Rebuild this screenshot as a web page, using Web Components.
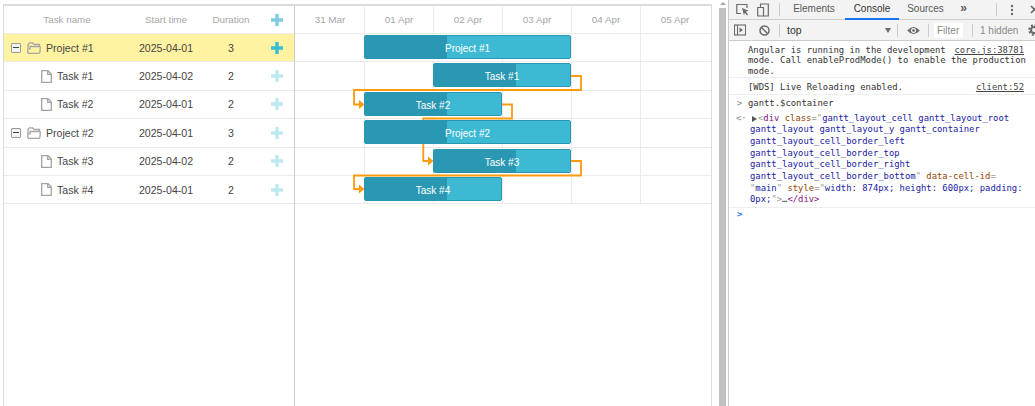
<!DOCTYPE html>
<html>
<head>
<meta charset="utf-8">
<style>
    html, body { margin: 0; height: 100%; overflow: hidden; background: #fff; }
    body { font-family: "Liberation Sans", Arial, sans-serif; }
</style>
</head>
<body>
<app-shell>
    <gantt-chart></gantt-chart>
    <page-scroll></page-scroll>
    <dev-tools></dev-tools>
</app-shell>

<script>
const ROW_H = 28.4;
const COLS = '126px 72px 58px 34px';
const tasks = [
    { name: 'Project #1', start: '2025-04-01', dur: 3, project: true, active: true },
    { name: 'Task #1', start: '2025-04-02', dur: 2 },
    { name: 'Task #2', start: '2025-04-01', dur: 2 },
    { name: 'Project #2', start: '2025-04-01', dur: 3, project: true },
    { name: 'Task #3', start: '2025-04-02', dur: 2 },
    { name: 'Task #4', start: '2025-04-01', dur: 2 },
];
const days = ['31 Mar', '01 Apr', '02 Apr', '03 Apr', '04 Apr', '05 Apr'];

const folderIcon = `<svg width="14" height="12" viewBox="0 0 14 12" fill="none" stroke="#a6a6a6" stroke-width="1.3">
    <path d="M1 7V2.5L2.5 .8H5.5L7 2.500H12.500V4.500"/>
    <path d="M3 4.500H12.500Q13.400 4.500 13.300 5.500L13 9.800Q12.800 11.300 11.500 11.300H2.500Q.7 11.300 .7 9.800V8Q.7 6.800 2 6.800H3Z"/>
</svg>`;
const fileIcon = `<svg width="11" height="13" viewBox="0 0 11 13" fill="#fff" stroke="#a3a3a3" stroke-width="1.3">
    <path d="M.7 .7H7L10.300 4V12.300H.7Z"/>
    <path d="M6.700 .7V4.300H10.300" fill="none"/>
</svg>`;
const plusIcon = (color) => `<svg width="12" height="12" viewBox="0 0 12 12" fill="${color}">
    <path d="M4.300 0H7.700V4.300H12V7.700H7.700V12H4.300V7.700H0V4.300H4.300Z"/>
</svg>`;

class GridRow extends HTMLElement {
    constructor() {
        super();
        this.attachShadow({ mode: 'open' });
    }
    connectedCallback() {
        const project = this.hasAttribute('project');
        const active = this.hasAttribute('active');
        const plus = active ? '#3db9d3' : '#bfe9f1';
        this.shadowRoot.innerHTML = `
            <style>
                :host {
                    display: grid;
                    grid-template-columns: ${COLS};
                    height: ${ROW_H}px;
                    box-sizing: border-box;
                    align-items: center;
                    border-bottom: 1px solid #ebebeb;
                    font-size: 10.6px;
                    color: #454545;
                    background: ${active ? '#fff3a1' : '#fff'};
                }
                .tree {
                    display: flex;
                    align-items: center;
                    padding-left: ${project ? 7 : 37}px;
                    gap: 5px;
                    white-space: nowrap;
                }
                .toggle {
                    width: 8px;
                    height: 8px;
                    border: 1px solid #9a9a9a;
                    background: #f4f4f4;
                    border-radius: 1px;
                    margin-right: 1px;
                    display: flex;
                    align-items: center;
                    justify-content: center;
                }
                .toggle i {
                    width: 6px;
                    height: 1px;
                    background: #444;
                }
                svg { display: block; flex: none; }
                .num { text-align: center; }
                .add { display: flex; justify-content: center; }
            </style>
            <div class="tree">
                ${project ? '<span class="toggle"><i></i></span>' + folderIcon : fileIcon}
                <span><slot></slot></span>
            </div>
            <div class="num">${this.getAttribute('start')}</div>
            <div class="num">${this.getAttribute('dur')}</div>
            <div class="add">${plusIcon(plus)}</div>
        `;
    }
}
customElements.define('grid-row', GridRow);

class GanttBar extends HTMLElement {
    constructor() {
        super();
        this.attachShadow({ mode: 'open' });
    }
    connectedCallback() {
        this.shadowRoot.innerHTML = `
            <style>
                :host {
                    position: absolute;
                    left: ${this.getAttribute('x')}px;
                    top: ${this.getAttribute('y')}px;
                    width: ${this.getAttribute('w')}px;
                    height: 24px;
                    box-sizing: border-box;
                    background: #3db9d3;
                    border: 1px solid #2898b0;
                    border-radius: 2px;
                    overflow: hidden;
                    color: #fff;
                    font-size: 10px;
                }
                .progress {
                    position: absolute;
                    left: 0;
                    top: 0;
                    bottom: 0;
                    width: ${this.getAttribute('p')}px;
                    background: #2a98b2;
                }
                .label {
                    position: relative;
                    text-align: center;
                    line-height: 25px;
                }
            </style>
            <div class="progress"></div>
            <div class="label"><slot></slot></div>
        `;
    }
}
customElements.define('gantt-bar', GanttBar);

class GanttChart extends HTMLElement {
    constructor() {
        super();
        this.attachShadow({ mode: 'open' });
        const rows = tasks.map(t => `<grid-row start="${t.start}" dur="${t.dur}" ${t.project ? 'project' : ''} ${t.active ? 'active' : ''}>${t.name}</grid-row>`).join('');
        const timeRows = tasks.map(() => `<div class="trow">${days.map(() => '<span></span>').join('')}</div>`).join('');
        this.shadowRoot.innerHTML = `
            <style>
                :host {
                    display: flex;
                    flex: none;
                    width: 709px;
                    height: 402px;
                    margin: 4px 0 0 3px;
                    box-sizing: border-box;
                    border: solid #dcdcdc;
                    border-width: 2px 1px 0 1px;
                }
                .grid {
                    width: 290px;
                    flex: none;
                    border-right: 1px solid #cecece;
                }
                .ghead {
                    display: grid;
                    grid-template-columns: ${COLS};
                    height: 27px;
                    align-items: center;
                    font-size: 9.8px;
                    color: #a6a6a6;
                    border-bottom: 1px solid #ebebeb;
                    text-align: center;
                }
                .ghead .add { display: flex; justify-content: center; }
                .ghead svg { display: block; }
                .timeline { flex: 1; position: relative; overflow: hidden; }
                .scale {
                    display: grid;
                    grid-template-columns: repeat(6, 69px);
                    height: 27px;
                    font-size: 9.8px;
                    color: #a6a6a6;
                    border-bottom: 1px solid #ebebeb;
                }
                .scale span {
                    display: flex;
                    align-items: center;
                    justify-content: center;
                    border-left: 1px solid #ebebeb;
                }
                .scale span:first-child, .trow span:first-child { border-left-color: transparent; }
                .trow {
                    display: grid;
                    grid-template-columns: repeat(6, 69px);
                    height: ${ROW_H}px;
                    box-sizing: border-box;
                    border-bottom: 1px solid #ebebeb;
                }
                .trow span { border-left: 1px solid #ebebeb; }
                .links { position: absolute; left: 0; top: 0; }
            </style>
            <div class="grid">
                <div class="ghead">
                    <div>Task name</div>
                    <div>Start time</div>
                    <div>Duration</div>
                    <div class="add">${plusIcon('#7fcbe0')}</div>
                </div>
                ${rows}
            </div>
            <div class="timeline">
                <div class="scale">${days.map(d => `<span>${d}</span>`).join('')}</div>
                ${timeRows}
                <svg class="links" width="420" height="220" fill="none" stroke="#ff9a0d" stroke-width="1.8">
                    <path d="M275 70H286V84H59V98.500H65"/>
                    <path d="M206 98.500H217V112.500H128.300V155H134"/>
                    <path d="M275 155H286V169.500H59V183H65"/>
                    <g fill="#ff9a0d" stroke="none">
                        <path d="M64 94L69.500 98.500L64 103Z"/>
                        <path d="M133 150.500L138.500 155L133 159.500Z"/>
                        <path d="M64 178.500L69.500 183L64 187.500Z"/>
                    </g>
                </svg>
                <gantt-bar x="69" y="29" w="207" p="82">Project #1</gantt-bar>
                <gantt-bar x="138" y="57" w="138" p="82">Task #1</gantt-bar>
                <gantt-bar x="69" y="86" w="138" p="82">Task #2</gantt-bar>
                <gantt-bar x="69" y="114" w="207" p="82">Project #2</gantt-bar>
                <gantt-bar x="138" y="143" w="138" p="82">Task #3</gantt-bar>
                <gantt-bar x="69" y="171" w="138" p="82">Task #4</gantt-bar>
            </div>
        `;
    }
}
customElements.define('gantt-chart', GanttChart);

class PageScroll extends HTMLElement {
    constructor() {
        super();
        this.attachShadow({ mode: 'open' });
        this.shadowRoot.innerHTML = `
            <style>
                :host {
                    display: block;
                    flex: none;
                    width: 16px;
                    height: 406px;
                    background: #fff;
                    position: relative;
                }
                .arrow {
                    position: absolute;
                    left: 8px;
                    top: 2px;
                    border: 3px solid transparent;
                    border-top: 0;
                    border-bottom: 3px solid #a3a3a3;
                }
                .thumb { position: absolute; left: 7px; width: 7px; top: 8px; bottom: 0; background: #c1c1c1; }
            </style>
            <div class="arrow"></div>
            <div class="thumb"></div>
        `;
    }
}
customElements.define('page-scroll', PageScroll);

class DevTools extends HTMLElement {
    constructor() {
        super();
        this.attachShadow({ mode: 'open' });
        const c = '#6a6a6a';
        this.shadowRoot.innerHTML = `
            <style>
                :host {
                    display: flex;
                    flex-direction: column;
                    flex: 1;
                    min-width: 0;
                    height: 406px;
                    overflow: hidden;
                    border-left: 1px solid #ccc;
                    box-sizing: border-box;
                    background: #fff;
                    font-size: 10px;
                    color: #333;
                }
                svg { display: block; flex: none; }
                .tabs, .bar {
                    display: flex;
                    align-items: center;
                    flex: none;
                    box-sizing: border-box;
                    background: #f3f3f3;
                    border-bottom: 1px solid #ccc;
                    white-space: nowrap;
                }
                .tabs { height: 20px; padding-left: 7px; }
                .bar { height: 21px; padding-left: 5px; }
                .tab { height: 20px; line-height: 18px; text-align: center; box-sizing: border-box; color: #5a5a5a; flex: none; }
                .tab.on { color: #333; border-bottom: 2px solid #1a73e8; }
                .sep { width: 1px; height: 13px; background: #ccc; flex: none; }
                .filter { background: #fff; color: #8a8a8a; padding: 0 0 0 3px; line-height: 15px; width: 26px; overflow: hidden; flex: none; }
                .log { font-family: "DejaVu Sans Mono", monospace; font-size: 8.9px; white-space: nowrap; }
                .msg { position: relative; padding-left: 19px; border-bottom: 1px solid #eee; line-height: 10.5px; }
                .src { position: absolute; right: 11px; text-decoration: underline; color: #444; }
                .gut { position: absolute; left: 8px; color: #888; }
                .tag { color: #881280; }
                .attr { color: #994500; }
                .val { color: #1a1aa6; }
                .punct { color: #999; }
                .result { padding: 4.500px 0 1px 21px; line-height: 11.670px; }
                .tri { position: absolute; left: 23px; top: 8px; width: 0; height: 0; border: 3px solid transparent; border-left: 5px solid #555; border-right: 0; }
            </style>
            <div class="tabs">
                <svg width="13" height="13" viewBox="0 0 13 13" fill="none" stroke="${c}" stroke-width="1.2"><path d="M5 10.500H.8V1.500H11V5"/><path d="M6 5L12.500 7.800L9.800 8.800L12 11.500L11 12.500L8.800 9.800L8 12.500Z" fill="${c}" stroke="none"/></svg>
                <svg style="margin-left:8px" width="12" height="14" viewBox="0 0 12 14" fill="none" stroke="${c}" stroke-width="1.2"><path d="M.7 13V4.500H6.500V13Z"/><path d="M3.500 4.500V1H11.300V13H6.500"/></svg>
                <span class="sep" style="margin:0 3px 0 10px"></span>
                <span class="tab" style="width:62px">Elements</span>
                <span class="tab on" style="width:54px">Console</span>
                <span class="tab" style="width:53px">Sources</span>
                <span class="tab" style="margin-left:7px;width:9px;font-size:12px;line-height:16px;font-weight:bold">»</span>
                <span class="sep" style="margin-left:28px"></span>
                <svg style="margin-left:13px" width="4" height="12" viewBox="0 0 4 12" fill="${c}"><circle cx="2" cy="2" r="1.2"/><circle cx="2" cy="6" r="1.2"/><circle cx="2" cy="10" r="1.2"/></svg>
                <svg style="margin-left:16px" width="9" height="9" viewBox="0 0 9 9" fill="none" stroke="${c}" stroke-width="1.6"><path d="M1 1L8 8M8 1L1 8"/></svg>
            </div>
            <div class="bar">
                <svg width="12" height="12" viewBox="0 0 12 12" fill="none" stroke="${c}" stroke-width="1.1"><rect x=".5" y="1" width="11" height="10"/><path d="M3.500 1V11"/><path d="M5.500 3.500L9 6L5.500 8.500Z" fill="${c}" stroke="none"/></svg>
                <svg style="margin-left:13px" width="11" height="11" viewBox="0 0 11 11" fill="none" stroke="${c}" stroke-width="1.5"><circle cx="5.5" cy="5.5" r="4.5"/><path d="M2.300 2.300L8.700 8.700"/></svg>
                <span class="sep" style="margin:0 7px 0 9px"></span>
                <span style="width:98px;flex:none;font-size:10.500px">top</span>
                <svg width="6" height="5" viewBox="0 0 6 5" fill="${c}"><path d="M0 0H6L3 5Z"/></svg>
                <span class="sep" style="margin:0 9px 0 6px"></span>
                <svg width="13" height="9" viewBox="0 0 14 10" fill="${c}"><path d="M0 5Q7 -3 14 5Q7 13 0 5Z"/><circle cx="7" cy="5" r="2.800" fill="#f3f3f3"/><circle cx="7" cy="5" r="1.500"/></svg>
                <span class="sep" style="margin:0 5px 0 8px"></span>
                <span class="filter">Filter</span>
                <span class="sep" style="margin:0 7px 0 9px"></span>
                <span style="color:#8a8a8a;flex:none">1 hidden</span>
                <svg style="margin-left:10px" width="12" height="12" viewBox="0 0 12 12" fill="none" stroke="${c}"><circle cx="6" cy="6" r="3" stroke-width="2"/><circle cx="6" cy="6" r="4.800" stroke-width="2" stroke-dasharray="2 1.770"/></svg>
            </div>
            <div class="log">
                <div class="msg" style="padding-top:3.500px;padding-bottom:1px">Angular is running in the development<span class="src" style="top:3.500px">core.js:38781</span><br>mode. Call enableProdMode() to enable the production<br>mode.</div>
                <div class="msg" style="padding-top:3.500px;padding-bottom:1.500px">[WDS] Live Reloading enabled.<span class="src">client:52</span></div>
                <div class="msg" style="border:0;padding-top:3px"><span class="gut">&gt;</span>gantt.$container</div>
                <div class="msg result"><span class="gut" style="left:7px">&lt;·</span><span class="tri"></span><span style="margin-left:8px" class="punct">&lt;</span><span class="tag">div</span> <span class="attr">class</span><span class="punct">="</span><span class="val">gantt_layout_cell gantt_layout_root<br>gantt_layout gantt_layout_y gantt_container<br>gantt_layout_cell_border_left<br>gantt_layout_cell_border_top<br>gantt_layout_cell_border_right<br>gantt_layout_cell_border_bottom</span><span class="punct">"</span> <span class="attr">data-cell-id</span><span class="punct">=</span><br><span class="punct">"</span><span class="val">main</span><span class="punct">"</span> <span class="attr">style</span><span class="punct">="</span><span class="val">width: 874px; height: 600px; padding:<br>0px;</span><span class="punct">"&gt;</span>…<span class="tag">&lt;/div&gt;</span></div>
                <div class="msg" style="border:0;padding-top:1.500px"><span class="gut" style="color:#1a73e8;font-weight:bold">&gt;</span>&nbsp;</div>
            </div>
        `;
    }
}
customElements.define('dev-tools', DevTools);

class AppShell extends HTMLElement {
    constructor() {
        super();
        this.attachShadow({ mode: 'open' });
        this.shadowRoot.innerHTML = `
            <style>
                :host { display: flex; width: 1035px; height: 406px; overflow: hidden; }
            </style>
            <slot></slot>
        `;
    }
}
customElements.define('app-shell', AppShell);
</script>
</body>
</html>
